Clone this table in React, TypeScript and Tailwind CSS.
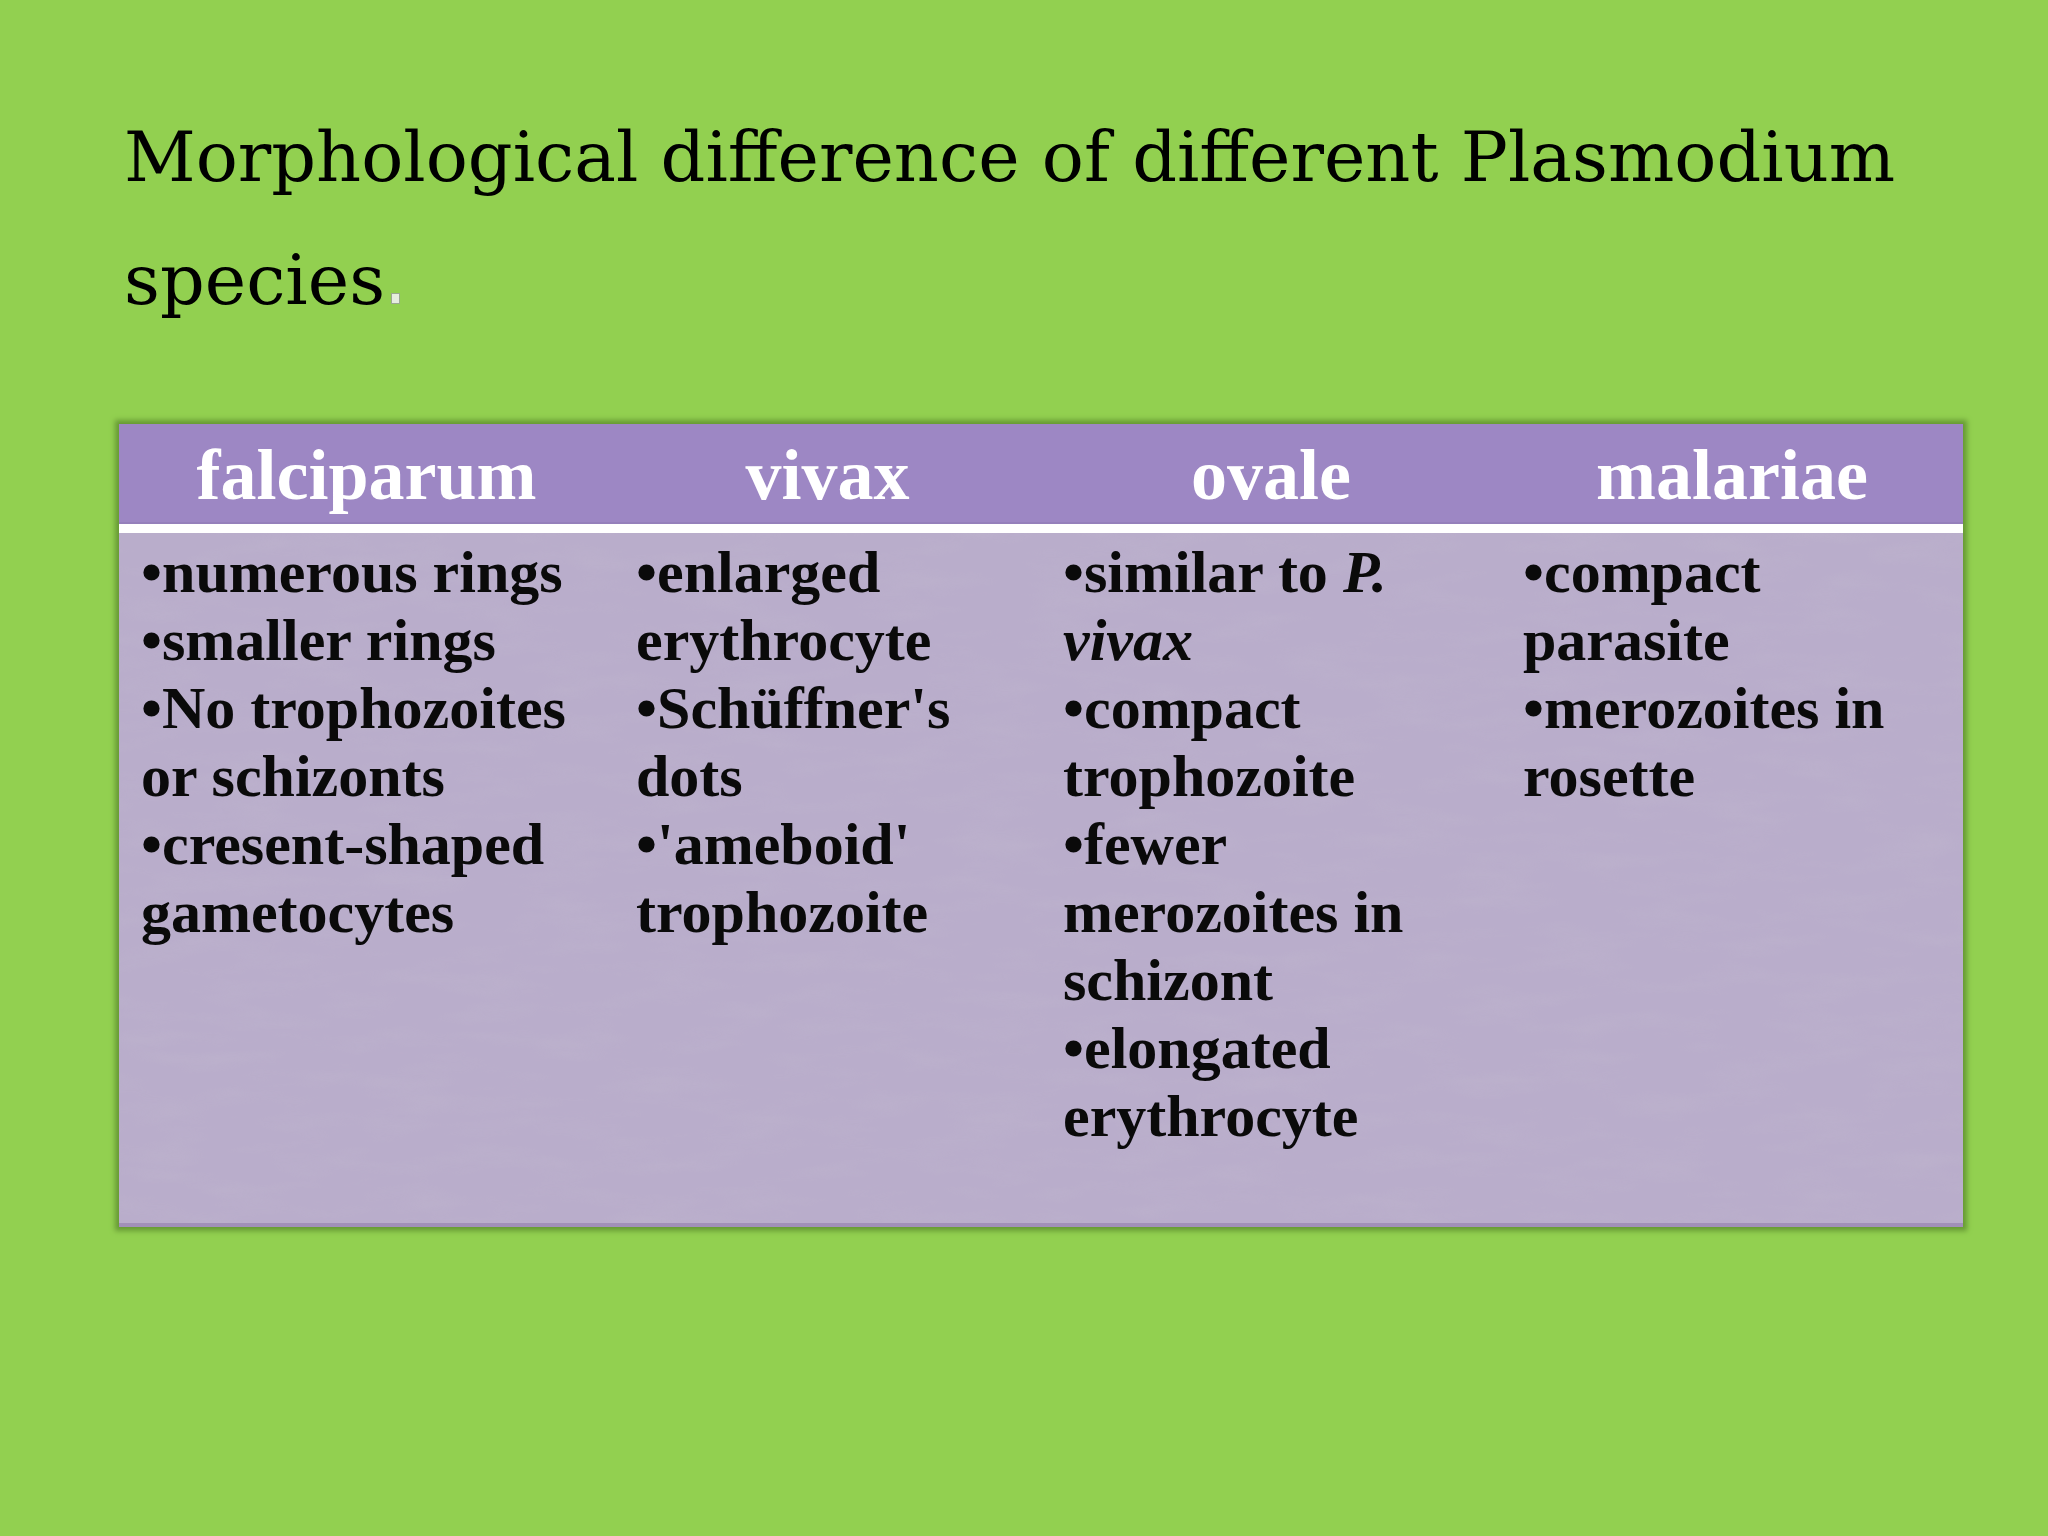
import React from 'react';

const columns: { title: string; lines: React.ReactNode[] }[] = [
  {
    title: 'falciparum',
    lines: ['•numerous rings', '•smaller rings', '•No trophozoites', 'or schizonts', '•cresent-shaped', 'gametocytes'],
  },
  {
    title: 'vivax',
    lines: ['•enlarged', 'erythrocyte', "•Schüffner's", 'dots', "•'ameboid'", 'trophozoite'],
  },
  {
    title: 'ovale',
    lines: [
      <>
        •similar to <i>P.</i>
      </>,
      <i>vivax</i>,
      '•compact',
      'trophozoite',
      '•fewer',
      'merozoites in',
      'schizont',
      '•elongated',
      'erythrocyte',
    ],
  },
  {
    title: 'malariae',
    lines: ['•compact', 'parasite', '•merozoites in', 'rosette'],
  },
];

// paper-like mottling for the table body
const PaperTexture: React.FC = () => (
  <svg className="absolute inset-0 w-full h-full pointer-events-none" aria-hidden="true">
    <filter id="paper">
      <feTurbulence type="fractalNoise" baseFrequency="0.012 0.05" numOctaves="3" seed="4" />
      <feColorMatrix
        type="matrix"
        values="0 0 0 0 0.55  0 0 0 0 0.5  0 0 0 0 0.62  0 0 0 1.1 -0.45"
      />
    </filter>
    <rect width="100%" height="100%" filter="url(#paper)" opacity="0.45" />
  </svg>
);

const App: React.FC = () => {
  return (
    <div className="w-[2048px] h-[1536px] bg-[#92d050] overflow-hidden">
      {/* slide title */}
      <div
        className="pl-[124px] pt-[96px] text-[70px] leading-[123px] text-black"
        style={{ fontFamily: '"DejaVu Serif", serif' }}
      >
        <div>Morphological difference of different Plasmodium</div>
        <div className="flex items-baseline">
          species
          <span className="inline-block w-[9px] h-[11px] ml-[6px] bg-[#e6ede0] border border-[#9aa890]" />
        </div>
      </div>

      {/* comparison table */}
      <div
        className="ml-[119px] mt-[82px] w-[1844px] shadow-[0_0_5px_4px_#679a35]"
        style={{ fontFamily: '"Liberation Serif", serif' }}
      >
        <div className="grid grid-cols-[495px_427px_460px_462px] h-[100px] bg-[#9d87c4] border-b-2 border-[#9580bb]">
          {columns.map((col) => (
            <div
              key={col.title}
              className="text-center text-white font-bold text-[72px] leading-[98px] pt-[2px] whitespace-nowrap"
            >
              {col.title}
            </div>
          ))}
        </div>
        <div className="h-[9px] bg-white" />
        <div className="relative grid grid-cols-[495px_427px_460px_462px] h-[694px] bg-[#b9adcb] pt-[5px] border-b-4 border-[#a190b8]">
          <PaperTexture />
          {columns.map((col) => (
            <div key={col.title} className="relative pl-[22px] text-[60px] leading-[68px] font-bold text-[#0a0a0a]">
              {col.lines.map((line, i) => (
                <div key={i} className="whitespace-nowrap">
                  {line}
                </div>
              ))}
            </div>
          ))}
        </div>
      </div>
    </div>
  );
};

export default App;
